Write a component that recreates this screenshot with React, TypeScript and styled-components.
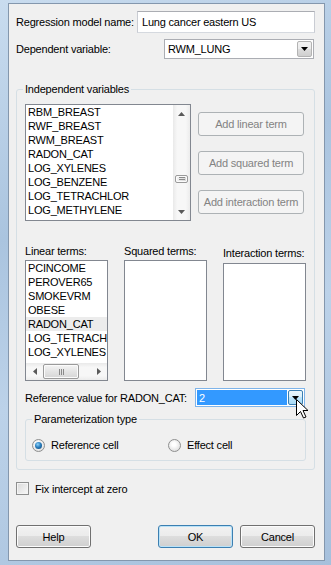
import styled, { createGlobalStyle } from "styled-components";

const GlobalStyle = createGlobalStyle`
  html, body {
    margin: 0;
    padding: 0;
  }
  body {
    font-family: "Liberation Sans", Arial, sans-serif;
    font-size: 11px;
    letter-spacing: -0.2px;
    color: #000;
  }
`;

const Frame = styled.div`
  width: 331px;
  height: 565px;
  box-sizing: border-box;
  padding: 3px 6px 4px 8px;
  display: flex;
  background: linear-gradient(160deg, #c9dcef 0%, #aac4df 35%, #bcd2e9 60%, #a6c0dc 100%);
`;

const Client = styled.div`
  flex: 1;
  display: flex;
  flex-direction: column;
  border: 1px solid #8497ad;
  background: #f0f0f0;
  padding: 7px 9px 0 7px;
`;

const Row = styled.div<{ $top?: number; $h: number }>`
  display: flex;
  align-items: center;
  height: ${(p) => p.$h}px;
  margin-top: ${(p) => p.$top ?? 0}px;
  flex-shrink: 0;
`;

const Label = styled.div<{ $w?: number }>`
  width: ${(p) => (p.$w ? `${p.$w}px` : "auto")};
  flex-shrink: 0;
  line-height: 14px;
  white-space: nowrap;
`;

const TextInput = styled.div`
  flex: 1;
  height: 100%;
  box-sizing: border-box;
  border: 1px solid;
  border-color: #abadb3 #c9ccd3 #d5d9df #c9ccd3;
  background: #fff;
  padding: 0 4px;
  display: flex;
  align-items: center;
`;

const Combo = styled.div<{ $active?: boolean; $w: number }>`
  position: relative;
  width: ${(p) => p.$w}px;
  height: 100%;
  box-sizing: border-box;
  display: flex;
  padding: 1px;
  border: 1px solid ${(p) => (p.$active ? "#7eb4ea" : "#abadb3")};
  background: #fff;
`;

const ComboValue = styled.div<{ $active?: boolean }>`
  flex: 1;
  display: flex;
  align-items: center;
  padding-left: 2px;
  background: ${(p) => (p.$active ? "#3399ff" : "transparent")};
  color: ${(p) => (p.$active ? "#fff" : "#000")};
`;

const DropButton = styled.div<{ $hover?: boolean }>`
  width: 15px;
  box-sizing: border-box;
  margin-left: 1px;
  border: 1px solid ${(p) => (p.$hover ? "#3c7fb1" : "#b3b3b3")};
  border-radius: 2px;
  background: ${(p) =>
    p.$hover
      ? "linear-gradient(#eaf6fd 0%, #d9f0fc 50%, #bee6fd 50%, #a7d9f5 100%)"
      : "linear-gradient(#f2f2f2 0%, #ebebeb 50%, #dddddd 50%, #cfcfcf 100%)"};
  display: flex;
  align-items: center;
  justify-content: center;
`;

const Cursor = styled.svg`
  position: absolute;
  left: 100px;
  top: 10px;
  pointer-events: none;
`;

const Group = styled.fieldset<{ $top: number; $pad: string }>`
  margin: ${(p) => p.$top}px 0 0 0;
  padding: ${(p) => p.$pad};
  border: 1px solid #d5dfe5;
  border-radius: 3px;
  min-width: 0;
  flex-shrink: 0;
`;

const Caption = styled.legend<{ $indent?: number }>`
  padding: 0 2px;
  margin-left: ${(p) => p.$indent ?? -2}px;
  line-height: 14px;
`;

const TopSection = styled.div`
  display: flex;
  height: 117px;
`;

const ButtonColumn = styled.div`
  display: flex;
  flex-direction: column;
  gap: 15px;
  margin-left: 7px;
  padding-top: 8px;
`;

const WinButton = styled.div<{ $w: number; $h: number; $disabled?: boolean; $default?: boolean }>`
  width: ${(p) => p.$w}px;
  height: ${(p) => p.$h}px;
  box-sizing: border-box;
  display: flex;
  align-items: center;
  justify-content: center;
  border-radius: 3px;
  white-space: nowrap;
  border: 1px solid ${(p) => (p.$disabled ? "#adb2b5" : p.$default ? "#3c7fb1" : "#707070")};
  color: ${(p) => (p.$disabled ? "#838383" : "#000")};
  background: ${(p) =>
    p.$disabled
      ? "#f4f4f4"
      : "linear-gradient(#f2f2f2 0%, #ebebeb 50%, #dddddd 50%, #cfcfcf 100%)"};
  box-shadow: ${(p) =>
    p.$disabled ? "none" : p.$default ? "inset 0 0 0 1px #b9e2f8" : "inset 0 0 0 1px #fcfcfc"};
`;

const ListBox = styled.div<{ $w: number; $h: number; $column?: boolean; $drop?: number }>`
  width: ${(p) => p.$w}px;
  height: ${(p) => p.$h}px;
  margin-top: ${(p) => p.$drop ?? 0}px;
  box-sizing: border-box;
  border: 1px solid #828790;
  background: #fff;
  display: flex;
  flex-direction: ${(p) => (p.$column ? "column" : "row")};
  overflow: hidden;
  flex-shrink: 0;
`;

const Items = styled.div`
  flex: 1;
  min-width: 0;
  overflow: hidden;
`;

const Item = styled.div<{ $selected?: boolean }>`
  line-height: 14px;
  height: 14px;
  padding-left: 2px;
  white-space: nowrap;
  overflow: hidden;
  background: ${(p) => (p.$selected ? "#ececec" : "transparent")};
`;

const VScroll = styled.div`
  width: 17px;
  display: flex;
  flex-direction: column;
  background: linear-gradient(90deg, #e9e9e9, #f7f7f7 25%, #f7f7f7 75%, #ececec);
`;

const HScroll = styled.div`
  height: 17px;
  display: flex;
  align-items: center;
  flex-shrink: 0;
  background: linear-gradient(#e9e9e9, #f7f7f7 25%, #f7f7f7 75%, #ececec);
`;

const ArrowBox = styled.div`
  width: 17px;
  height: 17px;
  flex-shrink: 0;
  display: flex;
  align-items: center;
  justify-content: center;
`;

const Track = styled.div<{ $offset: number; $horizontal?: boolean }>`
  flex: 1;
  display: flex;
  flex-direction: ${(p) => (p.$horizontal ? "row" : "column")};
  align-items: center;
  padding-${(p) => (p.$horizontal ? "left" : "top")}: ${(p) => p.$offset}px;
`;

const Thumb = styled.div<{ $w: number; $h: number }>`
  width: ${(p) => p.$w}px;
  height: ${(p) => p.$h}px;
  box-sizing: border-box;
  border: 1px solid #9a9a9a;
  border-radius: 2px;
  background: linear-gradient(90deg, #f4f4f4, #e4e4e4 50%, #d6d6d6);
  box-shadow: inset 0 0 0 1px #fbfbfb;
  display: flex;
  align-items: center;
  justify-content: center;
`;

const HThumb = styled(Thumb)`
  background: linear-gradient(#f4f4f4, #e4e4e4 50%, #d6d6d6);
`;

const TermsGrid = styled.div`
  display: flex;
  justify-content: space-between;
  margin-top: 23px;
`;

const TermColumn = styled.div<{ $drop?: number }>`
  display: flex;
  flex-direction: column;
  width: 83px;
  padding-top: ${(p) => p.$drop ?? 0}px;
`;

const TermLabel = styled.div`
  line-height: 14px;
  margin-bottom: 2px;
  white-space: nowrap;
`;

const RadioRow = styled.div`
  display: grid;
  grid-template-columns: 136px auto;
  height: 14px;
  padding-left: 6px;
`;

const Option = styled.div`
  display: flex;
  align-items: center;
  gap: 6px;
  line-height: 14px;
`;

const RadioCircle = styled.span<{ $checked?: boolean }>`
  width: 13px;
  height: 13px;
  box-sizing: border-box;
  border-radius: 50%;
  border: 1px solid #8e8f8f;
  background: radial-gradient(circle at 45% 40%, #ffffff 20%, #d8d8d8 90%);
  display: flex;
  align-items: center;
  justify-content: center;

  &::after {
    content: "";
    display: ${(p) => (p.$checked ? "block" : "none")};
    width: 7px;
    height: 7px;
    border-radius: 50%;
    background: radial-gradient(circle at 40% 35%, #8fd3fa 0%, #2b7fbf 45%, #0d3f6b 100%);
  }
`;

const CheckBox = styled.span`
  width: 13px;
  height: 13px;
  box-sizing: border-box;
  border: 1px solid #8e8f8f;
  background: linear-gradient(135deg, #d9d9d9, #f8f8f8);
  box-shadow: inset 0 0 0 1px #f4f4f4;
`;

const Spacer = styled.div`
  flex: 1;
`;

const ButtonRow = styled.div`
  display: flex;
  gap: 7px;
  margin-top: 30px;
`;

function Arrow({ dir, color = "#5a5a5a" }: { dir: "up" | "down" | "left" | "right"; color?: string }) {
  const pts = {
    up: "0,4 3.5,0 7,4",
    down: "0,0 7,0 3.5,4",
    left: "4,0 4,7 0,3.5",
    right: "0,0 0,7 4,3.5",
  }[dir];
  const vertical = dir === "up" || dir === "down";
  return (
    <svg width={vertical ? 7 : 4} height={vertical ? 4 : 7}>
      <polygon points={pts} fill={color} />
    </svg>
  );
}

function Grip({ horizontal }: { horizontal?: boolean }) {
  return horizontal ? (
    <svg width="7" height="6">
      <path d="M1.5 0v6M3.5 0v6M5.5 0v6" stroke="#8a8a8a" strokeWidth="1" />
    </svg>
  ) : (
    <svg width="6" height="4">
      <path d="M0 0.5h6M0 2.5h6" stroke="#8a8a8a" strokeWidth="1" />
    </svg>
  );
}

const independent = [
  "RBM_BREAST",
  "RWF_BREAST",
  "RWM_BREAST",
  "RADON_CAT",
  "LOG_XYLENES",
  "LOG_BENZENE",
  "LOG_TETRACHLOR",
  "LOG_METHYLENE",
  "Dattotal",
];

const linear = [
  "PCINCOME",
  "PEROVER65",
  "SMOKEVRM",
  "OBESE",
  "RADON_CAT",
  "LOG_TETRACHLOR",
  "LOG_XYLENES",
];

export default function App() {
  return (
    <>
      <GlobalStyle />
      <Frame>
        <Client>
          <Row $h={22}>
            <Label $w={121}>Regression model name:</Label>
            <TextInput>Lung cancer eastern US</TextInput>
          </Row>
          <Row $h={20} $top={6}>
            <Label $w={148}>Dependent variable:</Label>
            <Combo $w={150}>
              <ComboValue>RWM_LUNG</ComboValue>
              <DropButton>
                <Arrow dir="down" color="#000" />
              </DropButton>
            </Combo>
          </Row>

          <Group $top={23} $pad="8px 8px 8px 8px">
            <Caption>Independent variables</Caption>
            <TopSection>
              <ListBox $w={166} $h={117}>
                <Items>
                  {independent.map((v) => (
                    <Item key={v}>{v}</Item>
                  ))}
                </Items>
                <VScroll>
                  <ArrowBox>
                    <Arrow dir="up" />
                  </ArrowBox>
                  <Track $offset={53}>
                    <Thumb $w={13} $h={8}>
                      <Grip />
                    </Thumb>
                  </Track>
                  <ArrowBox>
                    <Arrow dir="down" />
                  </ArrowBox>
                </VScroll>
              </ListBox>
              <ButtonColumn>
                <WinButton $w={106} $h={24} $disabled>Add linear term</WinButton>
                <WinButton $w={106} $h={24} $disabled>Add squared term</WinButton>
                <WinButton $w={106} $h={24} $disabled>Add interaction term</WinButton>
              </ButtonColumn>
            </TopSection>

            <TermsGrid>
              <TermColumn>
                <TermLabel>Linear terms:</TermLabel>
                <ListBox $w={83} $h={121} $column>
                  <Items>
                    {linear.map((v) => (
                      <Item key={v} $selected={v === "RADON_CAT"}>{v}</Item>
                    ))}
                  </Items>
                  <HScroll>
                    <ArrowBox>
                      <Arrow dir="left" />
                    </ArrowBox>
                    <Track $offset={0} $horizontal>
                      <HThumb $w={36} $h={15}>
                        <Grip horizontal />
                      </HThumb>
                    </Track>
                    <ArrowBox>
                      <Arrow dir="right" />
                    </ArrowBox>
                  </HScroll>
                </ListBox>
              </TermColumn>
              <TermColumn>
                <TermLabel>Squared terms:</TermLabel>
                <ListBox $w={83} $h={121} />
              </TermColumn>
              <TermColumn $drop={2}>
                <TermLabel>Interaction terms:</TermLabel>
                <ListBox $w={83} $h={118} $drop={1} />
              </TermColumn>
            </TermsGrid>

            <Row $h={19} $top={7}>
              <Label $w={170}>Reference value for RADON_CAT:</Label>
              <Combo $w={110} $active>
                <ComboValue $active>2</ComboValue>
                <DropButton $hover>
                  <Arrow dir="down" color="#000" />
                </DropButton>
                <Cursor width="13" height="20" viewBox="0 0 13 20">
                  <path
                    d="M0.5 0.5 V16.5 L4.5 12.5 L7.5 19 L10 18 L7 11.5 H12 Z"
                    fill="#fff"
                    stroke="#000"
                    strokeWidth="1"
                    strokeLinejoin="miter"
                  />
                </Cursor>
              </Combo>
            </Row>

            <Group $top={5} $pad="12px 8px 8px 0">
              <Caption $indent={6}>Parameterization type</Caption>
              <RadioRow>
                <Option>
                  <RadioCircle $checked />
                  Reference cell
                </Option>
                <Option>
                  <RadioCircle />
                  Effect cell
                </Option>
              </RadioRow>
            </Group>
          </Group>

          <Row $h={13} $top={12}>
            <Option>
              <CheckBox />
              Fix intercept at zero
            </Option>
          </Row>

          <ButtonRow>
            <WinButton $w={75} $h={23}>Help</WinButton>
            <Spacer />
            <WinButton $w={75} $h={23} $default>OK</WinButton>
            <WinButton $w={75} $h={23}>Cancel</WinButton>
          </ButtonRow>
        </Client>
      </Frame>
    </>
  );
}
